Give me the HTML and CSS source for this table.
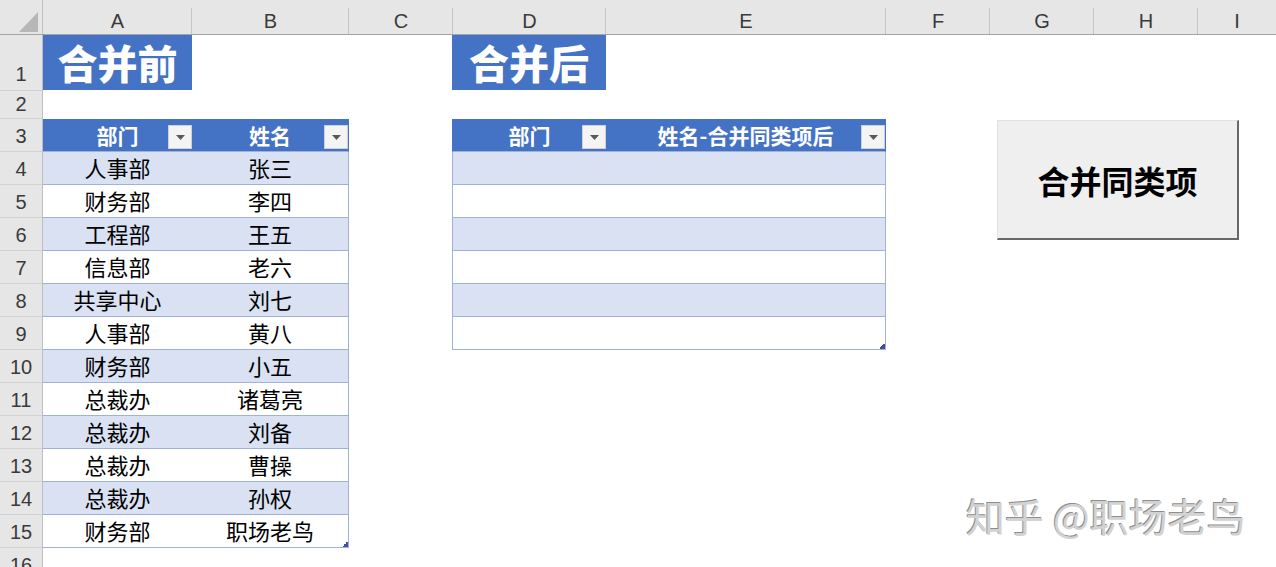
FILE: index.html
```html
<!DOCTYPE html>
<html lang="zh-CN">
<head>
<meta charset="utf-8">
<title>合并同类项</title>
<link rel="stylesheet" href="styles.css">
</head>
<body>
<div class="sheet">
  <div class="colhead">
    <div class="corner">
      <svg width="42" height="34" viewBox="0 0 42 34"><polygon points="19,32 38,32 38,12" fill="#b7b7b7"/></svg>
    </div>
    <div class="ch col-a">A</div>
    <div class="ch col-b">B</div>
    <div class="ch col-c">C</div>
    <div class="ch col-d">D</div>
    <div class="ch col-e">E</div>
    <div class="ch col-f">F</div>
    <div class="ch col-g">G</div>
    <div class="ch col-h">H</div>
    <div class="ch col-i">I</div>
  </div>
  <div class="body">
    <div class="rowhead">
      <div class="rh r-title">1</div>
      <div class="rh r-gap">2</div>
      <div class="rh">3</div>
      <div class="rh">4</div>
      <div class="rh">5</div>
      <div class="rh">6</div>
      <div class="rh">7</div>
      <div class="rh">8</div>
      <div class="rh">9</div>
      <div class="rh">10</div>
      <div class="rh">11</div>
      <div class="rh">12</div>
      <div class="rh">13</div>
      <div class="rh">14</div>
      <div class="rh">15</div>
      <div class="rh">16</div>
    </div>
    <div class="cells">
      <div class="title title-a">合并前</div>
      <div class="title title-d">合并后</div>

      <div class="tbl tbl-a">
        <div class="trow thead">
          <div class="tc w-a">部门<span class="dd"><svg width="9" height="5" viewBox="0 0 9 5"><polygon points="0,0 9,0 4.5,5" fill="#595959"/></svg></span></div>
          <div class="tc w-b">姓名<span class="dd"><svg width="9" height="5" viewBox="0 0 9 5"><polygon points="0,0 9,0 4.5,5" fill="#595959"/></svg></span></div>
        </div>
        <div class="trow band"><div class="tc w-a">人事部</div><div class="tc w-b">张三</div></div>
        <div class="trow"><div class="tc w-a">财务部</div><div class="tc w-b">李四</div></div>
        <div class="trow band"><div class="tc w-a">工程部</div><div class="tc w-b">王五</div></div>
        <div class="trow"><div class="tc w-a">信息部</div><div class="tc w-b">老六</div></div>
        <div class="trow band"><div class="tc w-a">共享中心</div><div class="tc w-b">刘七</div></div>
        <div class="trow"><div class="tc w-a">人事部</div><div class="tc w-b">黄八</div></div>
        <div class="trow band"><div class="tc w-a">财务部</div><div class="tc w-b">小五</div></div>
        <div class="trow"><div class="tc w-a">总裁办</div><div class="tc w-b">诸葛亮</div></div>
        <div class="trow band"><div class="tc w-a">总裁办</div><div class="tc w-b">刘备</div></div>
        <div class="trow"><div class="tc w-a">总裁办</div><div class="tc w-b">曹操</div></div>
        <div class="trow band"><div class="tc w-a">总裁办</div><div class="tc w-b">孙权</div></div>
        <div class="trow last"><div class="tc w-a">财务部</div><div class="tc w-b">职场老鸟</div><span class="handle"></span></div>
      </div>

      <div class="tbl tbl-d">
        <div class="trow thead">
          <div class="tc w-d">部门<span class="dd"><svg width="9" height="5" viewBox="0 0 9 5"><polygon points="0,0 9,0 4.5,5" fill="#595959"/></svg></span></div>
          <div class="tc w-e">姓名-合并同类项后<span class="dd"><svg width="9" height="5" viewBox="0 0 9 5"><polygon points="0,0 9,0 4.5,5" fill="#595959"/></svg></span></div>
        </div>
        <div class="trow band"><div class="tc w-d"></div><div class="tc w-e"></div></div>
        <div class="trow"><div class="tc w-d"></div><div class="tc w-e"></div></div>
        <div class="trow band"><div class="tc w-d"></div><div class="tc w-e"></div></div>
        <div class="trow"><div class="tc w-d"></div><div class="tc w-e"></div></div>
        <div class="trow band"><div class="tc w-d"></div><div class="tc w-e"></div></div>
        <div class="trow last"><div class="tc w-d"></div><div class="tc w-e"></div><span class="handle"></span></div>
      </div>
    </div>
  </div>

  <div class="macro-btn">合并同类项</div>
  <div class="watermark">知乎 @职场老鸟</div>
</div>
</body>
</html>
```

FILE: styles.css
```css
* { box-sizing: border-box; }

body {
  margin: 0;
  background: #ffffff;
  font-family: "Noto Sans CJK SC", "Noto Sans", sans-serif;
}

.sheet {
  position: relative;
  width: 1276px;
  height: 567px;
  overflow: hidden;
  background: #ffffff;
}

/* ---------- column header ---------- */
.colhead {
  display: flex;
  height: 35px;
  background: #e6e6e6;
  border-bottom: 1px solid #a3a3a3;
}

.corner {
  width: 43px;
  flex: none;
  border-right: 1px solid #bdbdbd;
  display: flex;
}

.ch {
  flex: none;
  padding-top: 8px;
  text-align: center;
  font-family: "Liberation Sans", Arial, sans-serif;
  font-size: 20px;
  line-height: 26px;
  color: #3a3a3a;
  background: linear-gradient(#c4c4c4, #c4c4c4) right 8px / 1px calc(100% - 8px) no-repeat;
}

.col-a { width: 149px; }
.col-b { width: 157px; }
.col-c { width: 104px; }
.col-d { width: 153px; }
.col-e { width: 280px; }
.col-f { width: 104px; }
.col-g { width: 104px; }
.col-h { width: 104px; }
.col-i { flex: 1; background: none; }

/* ---------- body ---------- */
.body {
  display: flex;
}

.rowhead {
  width: 43px;
  flex: none;
  background: #e6e6e6;
  border-right: 1px solid #bdbdbd;
  display: flex;
  flex-direction: column;
}

.rh {
  height: 33px;
  border-bottom: 1px solid #d2d2d2;
  display: flex;
  align-items: flex-end;
  justify-content: center;
  padding-bottom: 3px;
  font-family: "Liberation Sans", Arial, sans-serif;
  font-size: 20px;
  line-height: 24px;
  color: #3a3a3a;
}

.rh.r-title { height: 56px; padding-bottom: 4px; }
.rh.r-gap { height: 28px; padding-bottom: 2px; }

.cells {
  flex: 1;
  display: grid;
  grid-template-columns: 149px 157px 104px 153px 280px 1fr;
  grid-template-rows: 56px 28px auto;
  align-items: start;
}

/* ---------- titles ---------- */
.title {
  height: 55px;
  background: #4472c4;
  color: #ffffff;
  font-size: 40px;
  font-weight: 900;
  line-height: 55px;
  text-align: center;
  grid-row: 1;
}

.title-a { grid-column: 1; }
.title-d { grid-column: 4; margin-left: -1px; }

/* ---------- tables ---------- */
.tbl {
  grid-row: 3;
  display: flex;
  flex-direction: column;
}

.tbl-a { grid-column: 1 / 3; width: 306px; }
.tbl-d { grid-column: 4 / 6; width: 434px; margin-left: -1px; }

.trow {
  position: relative;
  display: flex;
  height: 33px;
  border-bottom: 1px solid #9fb2dc;
  border-right: 1px solid #9fb2dc;
  background: #ffffff;
}

.tbl-d .trow { border-left: 1px solid #9fb2dc; }

.trow.band { background: #d9e1f2; }

.trow.thead {
  background: #4472c4;
  border-right-color: #4472c4;
  color: #ffffff;
  font-weight: 700;
}

.tbl-d .trow.thead { border-left-color: #4472c4; }

.tc {
  position: relative;
  flex: none;
  display: flex;
  align-items: center;
  justify-content: center;
  font-size: 22px;
  line-height: 30px;
  color: inherit;
}

.trow.thead .tc { font-size: 21px; }

.trow:not(.thead) .tc { color: #000000; padding-bottom: 2px; }

.tbl-a .w-a { width: 149px; }
.tbl-a .w-b { width: 156px; }
.tbl-d .w-d { width: 153px; }
.tbl-d .w-e { width: 279px; }

.dd {
  position: absolute;
  right: 0;
  top: 6px;
  width: 24px;
  height: 24px;
  background: #f4f4f4;
  border: 1px solid #d0d0d0;
  display: flex;
  align-items: center;
  justify-content: center;
}

.handle {
  position: absolute;
  right: 0;
  bottom: 0;
  width: 5px;
  height: 5px;
  background: linear-gradient(135deg, transparent 40%, #3f4fa3 40%);
}

/* ---------- macro button ---------- */
.macro-btn {
  position: absolute;
  left: 997px;
  top: 120px;
  width: 242px;
  height: 120px;
  background: #efefef;
  border-top: 1px solid #e2e2e2;
  border-left: 1px solid #e2e2e2;
  border-right: 2px solid #686868;
  border-bottom: 2px solid #686868;
  display: flex;
  align-items: center;
  justify-content: center;
  font-size: 32px;
  font-weight: 700;
  color: #000000;
}

/* ---------- watermark ---------- */
.watermark {
  position: absolute;
  left: 966px;
  top: 490px;
  font-size: 39px;
  line-height: 50px;
  color: #d2d2d2;
  text-shadow: -1px -1px 0 #8e8e8e;
  white-space: nowrap;
}
```
